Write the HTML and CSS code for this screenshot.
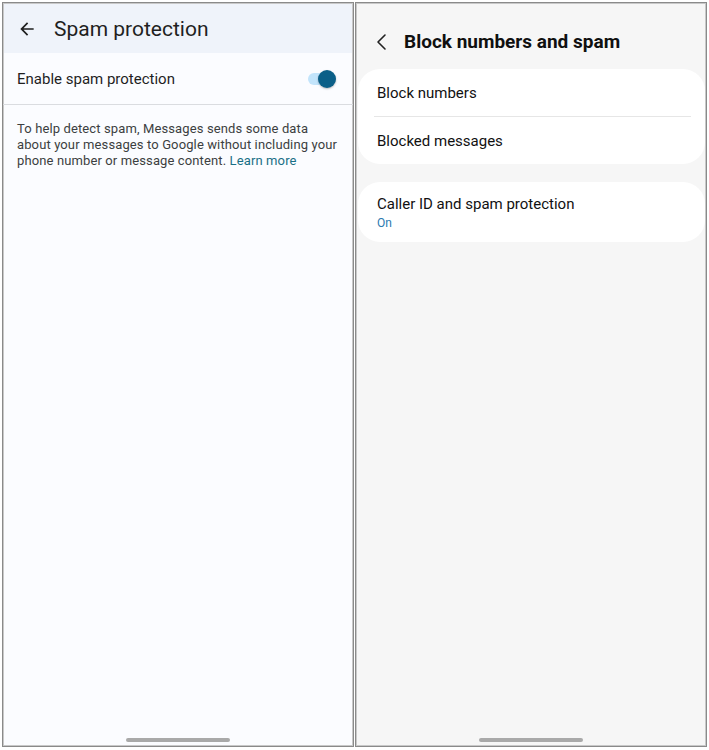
FILE: index.html
```html
<!DOCTYPE html>
<html>
<head>
<meta charset="utf-8">
<link rel="stylesheet" href="styles.css">
</head>
<body>
<div class="frame">
  <section class="panel panel-left">
    <header class="g-header">
      <svg class="g-back" width="24" height="24" viewBox="0 0 24 24"><path d="M20 11H7.83l5.59-5.59L12 4l-8 8 8 8 1.41-1.41L7.83 13H20v-2z" fill="#1f1f1f"/></svg>
      <h1 class="g-title">Spam protection</h1>
    </header>
    <div class="g-row">
      <span class="g-row-label">Enable spam protection</span>
      <span class="toggle"><span class="toggle-track"></span><span class="toggle-thumb"></span></span>
    </div>
    <p class="g-desc">To help detect spam, Messages sends some data about your messages to Google without including your phone number or message content. <a class="g-link">Learn more</a></p>
    <div class="spacer"></div>
    <div class="handle"></div>
  </section>
  <section class="panel panel-right">
    <header class="s-header">
      <svg class="s-back" width="16" height="20" viewBox="0 0 16 20"><path d="M11 3 L4 10 L11 17" fill="none" stroke="#222" stroke-width="1.6" stroke-linecap="round" stroke-linejoin="round"/></svg>
      <h1 class="s-title">Block numbers and spam</h1>
    </header>
    <div class="card">
      <div class="s-item">Block numbers</div>
      <div class="s-divider"></div>
      <div class="s-item">Blocked messages</div>
    </div>
    <div class="card card-single">
      <div class="s-item s-item-two">
        <span>Caller ID and spam protection</span>
        <span class="s-sub">On</span>
      </div>
    </div>
    <div class="spacer"></div>
    <div class="handle"></div>
  </section>
</div>
</body>
</html>
```

FILE: styles.css
```css
html, body {
  margin: 0;
  padding: 0;
  background: #ffffff;
}

.frame {
  display: flex;
  gap: 1px;
  padding: 2px;
  width: 709px;
  height: 750px;
  box-sizing: border-box;
}

.panel {
  width: 352px;
  height: 745px;
  box-sizing: border-box;
  border: 1px solid #8a8a8a;
  box-shadow: inset 0 0 0 1px #c8c8c8;
  display: flex;
  flex-direction: column;
  font-family: Roboto, "Noto Sans", sans-serif;
  overflow: hidden;
}

.panel-left {
  background: #fbfcff;
}

.panel-right {
  background: #f6f6f6;
}

.g-header {
  height: 49px;
  background: #eff3fa;
  display: flex;
  align-items: center;
  padding: 0 0 0 13px;
  margin: 1px 1px 0 1px;
}

.g-back {
  width: 20px;
  height: 20px;
}

.g-title {
  margin: 0 0 0 17px;
  font-weight: 400;
  font-size: 21px;
  color: #1f1f1f;
  letter-spacing: 0;
}

.g-row {
  height: 51px;
  display: flex;
  align-items: center;
  justify-content: space-between;
  padding: 0 17px 0 14px;
  border-bottom: 1px solid #dadce0;
}

.g-row-label {
  font-size: 15px;
  color: #1f1f1f;
}

.toggle {
  position: relative;
  width: 28px;
  height: 20px;
  display: block;
}

.toggle-track {
  position: absolute;
  left: 0;
  top: 4px;
  width: 26px;
  height: 12px;
  border-radius: 6px;
  background: #c2e4fb;
}

.toggle-thumb {
  position: absolute;
  right: 0;
  top: 1px;
  width: 18px;
  height: 18px;
  border-radius: 50%;
  background: #0b5f88;
  box-shadow: 0 1px 2px rgba(0,0,0,0.25);
}

.g-desc {
  margin: 16px 0 0 14px;
  width: 324px;
  font-size: 13px;
  line-height: 16px;
  letter-spacing: 0.12px;
  color: #3c3f41;
}

.g-link {
  color: #196f86;
  text-decoration: none;
}

.spacer {
  flex: 1;
}

.handle {
  align-self: center;
  width: 104px;
  height: 4px;
  border-radius: 2px;
  background: #a9a9a9;
  margin-bottom: 4px;
}

.s-header {
  height: 62px;
  display: flex;
  align-items: center;
  padding: 15px 0 0 18px;
  box-sizing: border-box;
}

.s-back {
  width: 16px;
  height: 20px;
}

.s-title {
  margin: 0 0 0 14px;
  font-size: 19px;
  font-weight: 700;
  color: #101010;
}

.card {
  background: #ffffff;
  border-radius: 22px;
  margin: 4px 1px 0 2px;
  padding: 0 16px 0 19px;
}

.card-single {
  margin-top: 18px;
}

.s-item {
  height: 47px;
  display: flex;
  align-items: center;
  font-size: 15px;
  color: #111;
}

.s-item-two {
  height: 60px;
  flex-direction: column;
  align-items: flex-start;
  justify-content: center;
}

.s-sub {
  font-size: 12px;
  color: #2a7ab0;
  margin-top: 3px;
}

.s-divider {
  height: 1px;
  background: #e6e6e6;
  margin: 0 -2px 0 -3px;
}
```
